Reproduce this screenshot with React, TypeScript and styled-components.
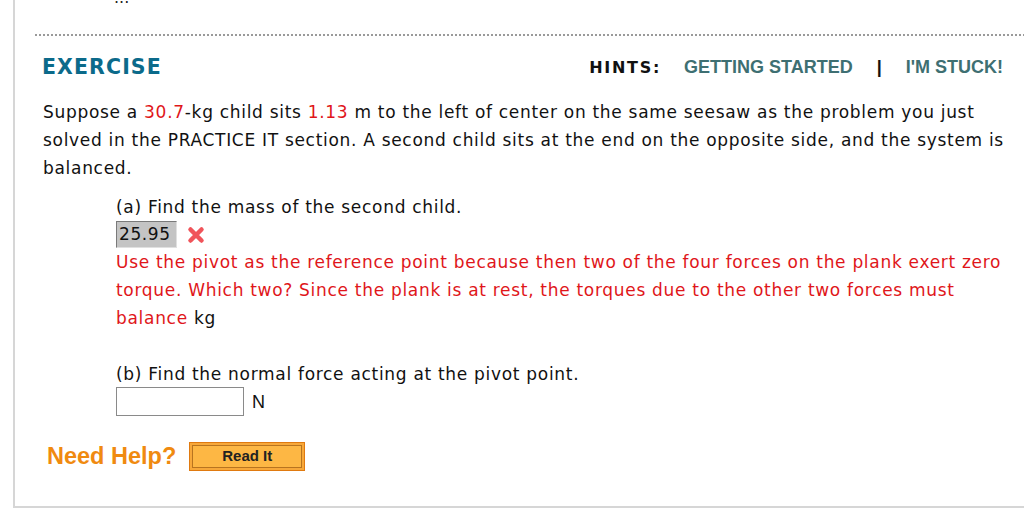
import React from "react";
import styled, { createGlobalStyle } from "styled-components";

const Global = createGlobalStyle`
  html, body { margin: 0; padding: 0; background: #fff; }
  body { font-family: "DejaVu Sans", Verdana, sans-serif; color: #111; overflow: hidden; }
`;

const Page = styled.div`
  width: 1024px;
  height: 524px;
  overflow: hidden;
`;

const Remnant = styled.div`
  height: 0;
  padding-left: 114px;
  font-size: 16px;
  line-height: 0;
  color: #222;
  transform: translateY(-2px);
`;

const Frame = styled.div`
  margin-left: 13px;
  width: 1040px;
  height: 472px;
  border-left: 2px solid #d6d6d6;
  border-bottom: 2px solid #d6d6d6;
  padding-top: 34px;
`;

const Inner = styled.div`
  margin-left: 19px;
`;

const Dotted = styled.div`
  height: 2px;
  background-image: radial-gradient(circle, #9a9a9a 0.9px, transparent 1px);
  background-size: 4px 2px;
  background-repeat: repeat-x;
`;

const Header = styled.div`
  display: flex;
  align-items: center;
  justify-content: space-between;
  width: 961px;
  padding: 17px 0 0 8px;
  height: 28px;
`;

const Title = styled.h2`
  margin: 0;
  font-family: "DejaVu Sans", Verdana, sans-serif;
  font-weight: bold;
  font-size: 20.5px;
  color: #0b6a8a;
  letter-spacing: 1.1px;
`;

const Hints = styled.div`
  display: flex;
  align-items: center;
  font-family: "Liberation Sans", Arial, sans-serif;
  font-weight: bold;
  font-size: 18px;
`;

const HintsLabel = styled.span`
  font-family: "DejaVu Sans", Verdana, sans-serif;
  font-size: 16px;
  color: #111;
  margin-right: 23px;
  letter-spacing: 1.7px;
`;

const HintLink = styled.span`
  color: #3e6f72;
`;

const Sep = styled.span`
  color: #111;
  margin: 0 24px;
`;

const Body = styled.div`
  font-size: 17px;
  letter-spacing: 0.7px;
  line-height: 28px;
`;

const Para = styled.p`
  margin: 17px 0 0 9px;
  width: 975px;
`;

const Red = styled.span`
  color: #e0161a;
`;

const Part = styled.div<{ $top: number }>`
  margin: ${(p) => p.$top}px 0 0 82px;
`;

const Row = styled.div`
  display: flex;
  align-items: center;
  height: 27px;
`;

const Answer = styled.div`
  box-sizing: border-box;
  width: 61px;
  height: 27px;
  background: #c4c4c4;
  border: 1px solid #7a7a7a;
  border-right-color: #e0e0e0;
  border-bottom-color: #e0e0e0;
  line-height: 25px;
  padding-left: 2px;
  letter-spacing: 0.6px;
`;

const Input = styled.div`
  box-sizing: border-box;
  width: 128px;
  height: 29px;
  background: #fff;
  border: 1px solid #8a8a8a;
`;

const XMark = styled.svg`
  margin-left: 10px;
  width: 18px;
  height: 18px;
`;

const Feedback = styled.div`
  color: #e0161a;
  width: 895px;
`;

const Unit = styled.span`
  color: #111;
`;

const UnitN = styled.span`
  margin-left: 8px;
  font-family: "Liberation Sans", Arial, sans-serif;
  font-size: 18px;
  letter-spacing: 0;
`;

const Help = styled.div`
  display: flex;
  align-items: center;
  margin: 27px 0 0 13px;
`;

const NeedHelp = styled.span`
  font-family: "Liberation Sans", Arial, sans-serif;
  font-weight: bold;
  font-size: 23.5px;
  color: #f08a10;
`;

const ReadIt = styled.button`
  margin-left: 13px;
  width: 116px;
  height: 29px;
  padding: 2px;
  background: #f7a83a;
  border: 1px solid #e07a10;
  box-sizing: border-box;
  cursor: pointer;
`;

const ReadInner = styled.span`
  display: block;
  height: 100%;
  box-sizing: border-box;
  background: #fdb744;
  border: 1px solid #b8741f;
  font-family: "Liberation Sans", Arial, sans-serif;
  font-weight: bold;
  font-size: 15px;
  line-height: 20px;
  color: #222;
`;

export default function App() {
  return (
    <Page>
      <Global />
      <Remnant>...</Remnant>
      <Frame>
        <Inner>
          <Dotted />
          <Header>
            <Title>EXERCISE</Title>
            <Hints>
              <HintsLabel>HINTS:</HintsLabel>
              <HintLink>GETTING STARTED</HintLink>
              <Sep>|</Sep>
              <HintLink>I'M STUCK!</HintLink>
            </Hints>
          </Header>
          <Body>
            <Para>
              Suppose a <Red>30.7</Red>-kg child sits <Red>1.13</Red> m to the left of center on the same seesaw as
              the problem you just solved in the PRACTICE IT section. A second child sits at the end on the opposite
              side, and the system is balanced.
            </Para>
            <Part $top={11}>
              <div>(a) Find the mass of the second child.</div>
              <Row>
                <Answer>25.95</Answer>
                <XMark viewBox="0 0 18 18">
                  <path d="M3.5 3.5 L14.5 14.5 M14.5 3.5 L3.5 14.5" stroke="#f0545a" strokeWidth="4.5" strokeLinecap="round" />
                </XMark>
              </Row>
              <Feedback>
                Use the pivot as the reference point because then two of the four forces on the plank exert zero
                torque. Which two? Since the plank is at rest, the torques due to the other two forces must balance{" "}
                <Unit>kg</Unit>
              </Feedback>
            </Part>
            <Part $top={28}>
              <div>(b) Find the normal force acting at the pivot point.</div>
              <Row>
                <Input />
                <UnitN>N</UnitN>
              </Row>
            </Part>
          </Body>
          <Help>
            <NeedHelp>Need Help?</NeedHelp>
            <ReadIt>
              <ReadInner>Read It</ReadInner>
            </ReadIt>
          </Help>
        </Inner>
      </Frame>
    </Page>
  );
}
